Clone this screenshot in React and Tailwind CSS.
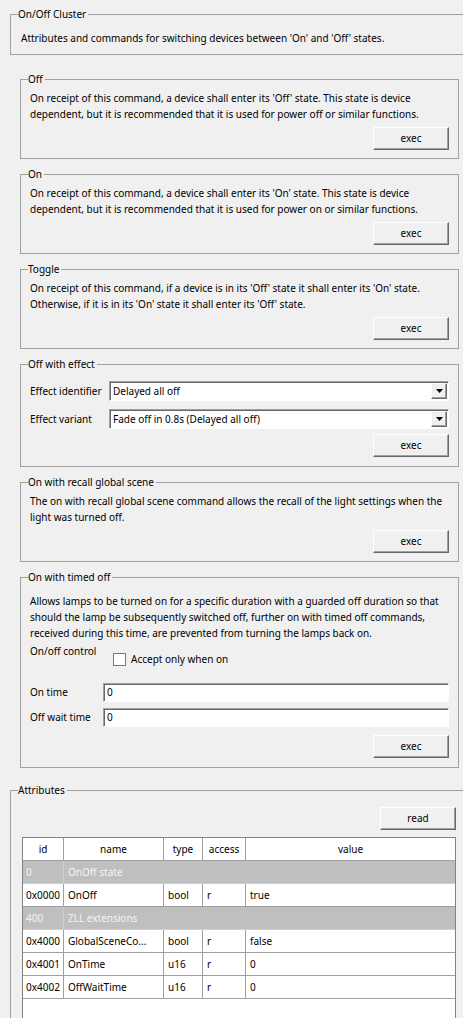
import React from "react";

const GroupBox = ({ title, className = "", children }) => (
  <fieldset className={`m-0 min-w-0 border border-[#a0a0a0] p-0 ${className}`}>
    <legend className="ml-[7px] pr-[2px] leading-[14px]">{title}</legend>
    {children}
  </fieldset>
);

const Button = ({ label = "exec", className = "" }) => (
  <div className={`flex justify-end ${className}`}>
    <button className="h-[23px] w-[76px] border border-b-[#696969] border-l-white border-r-[#696969] border-t-white bg-[#f0f0f0] text-black shadow-[inset_-1px_-1px_0_#a0a0a0]">
      {label}
    </button>
  </div>
);

const Combo = ({ value }) => (
  <div className="flex h-[20px] flex-1 items-center border border-b-white border-l-[#a0a0a0] border-r-white border-t-[#a0a0a0] bg-white shadow-[inset_1px_1px_0_#696969]">
    <span className="flex-1 pl-[3px]">{value}</span>
    <div className="mr-[1px] flex h-[16px] w-[16px] items-center justify-center border border-b-[#696969] border-l-white border-r-[#696969] border-t-white bg-[#f0f0f0] shadow-[inset_-1px_-1px_0_#a0a0a0]">
      <svg width="7" height="4" viewBox="0 0 7 4">
        <path d="M0 0h7L3.5 4z" fill="#000" />
      </svg>
    </div>
  </div>
);

const LineEdit = ({ value }) => (
  <div className="flex h-[19px] flex-1 items-center border border-b-white border-l-[#a0a0a0] border-r-white border-t-[#a0a0a0] bg-white pl-[3px] shadow-[inset_1px_1px_0_#696969]">
    {value}
  </div>
);

const CommandBox = ({ title, text }) => (
  <GroupBox title={title}>
    <div className="px-[9px] pb-[8px] pt-[4px]">
      <p className="leading-[16px]">{text}</p>
      <Button className="mt-[5px]" />
    </div>
  </GroupBox>
);

const rows = [
  { group: true, id: "0", name: "OnOff state" },
  { id: "0x0000", name: "OnOff", type: "bool", access: "r", value: "true" },
  { group: true, id: "400", name: "ZLL extensions" },
  { id: "0x4000", name: "GlobalSceneCo...", type: "bool", access: "r", value: "false" },
  { id: "0x4001", name: "OnTime", type: "u16", access: "r", value: "0" },
  { id: "0x4002", name: "OffWaitTime", type: "u16", access: "r", value: "0" },
];

const headers = ["id", "name", "type", "access", "value"];

export default function App() {
  return (
    <div className="h-[1018px] w-[463px] overflow-hidden bg-[#f0f0f0] font-['Noto_Sans',sans-serif] text-[10px] leading-[13px] text-black">
      <div className="ml-[10px] w-[456px] pt-[7px]">
        {/* CLUSTER INFO */}
        <GroupBox title="On/Off Cluster">
          <p className="pb-[9px] pl-[10px] pt-[11px]">
            Attributes and commands for switching devices between 'On' and 'Off' states.
          </p>
        </GroupBox>

        {/* COMMANDS */}
        <div className="ml-[10px] mr-[7px] mt-[17px] flex flex-col gap-[8px]">
          <CommandBox
            title="Off"
            text="On receipt of this command, a device shall enter its 'Off' state. This state is device dependent, but it is recommended that it is used for power off or similar functions."
          />
          <CommandBox
            title="On"
            text="On receipt of this command, a device shall enter its 'On' state. This state is device dependent, but it is recommended that it is used for power on or similar functions."
          />
          <CommandBox
            title="Toggle"
            text="On receipt of this command, if a device is in its 'Off' state it shall enter its 'On' state. Otherwise, if it is in its 'On' state it shall enter its 'Off' state."
          />

          <GroupBox title="Off with effect">
            <div className="px-[9px] pb-[9px] pt-[10px]">
              <div className="flex items-center">
                <span className="w-[79px]">Effect identifier</span>
                <Combo value="Delayed all off" />
              </div>
              <div className="mt-[8px] flex items-center">
                <span className="w-[79px]">Effect variant</span>
                <Combo value="Fade off in 0.8s (Delayed all off)" />
              </div>
              <Button className="mt-[5px]" />
            </div>
          </GroupBox>

          <CommandBox
            title="On with recall global scene"
            text="The on with recall global scene command allows the recall of the light settings when the light was turned off."
          />

          <GroupBox title="On with timed off">
            <div className="px-[9px] pb-[9px] pt-[9px]">
              <p className="leading-[16px]">
                Allows lamps to be turned on for a specific duration with a guarded off duration so that should the lamp be subsequently switched off, further on with timed off commands, received during this time, are prevented from turning the lamps back on.
              </p>
              <div className="mt-[4px] flex items-start">
                <span className="w-[73px]">On/off control</span>
                <label className="ml-[10px] mt-[8px] flex items-center gap-[5px]">
                  <span className="h-[13px] w-[13px] border border-[#7a7a7a] bg-white" />
                  <span>Accept only when on</span>
                </label>
              </div>
              <div className="mt-[17px] flex items-center">
                <span className="w-[73px]">On time</span>
                <LineEdit value="0" />
              </div>
              <div className="mt-[6px] flex items-center">
                <span className="w-[73px]">Off wait time</span>
                <LineEdit value="0" />
              </div>
              <Button className="mt-[8px]" />
            </div>
          </GroupBox>
        </div>

        {/* ATTRIBUTES */}
        <GroupBox title="Attributes" className="mt-[15px]">
          <div className="pl-[11px] pr-[9px] pt-[10px]">
            <Button label="read" />
            <div className="mt-[7px] h-[200px] border border-[#828282] bg-white">
              <div className="grid grid-cols-[41px_100px_39px_43px_1fr]">
                {headers.map((h, i) => (
                  <div
                    key={h}
                    className={`flex h-[23px] items-center justify-center border-b border-[#a0a0a0] bg-white ${i < 4 ? "border-r" : ""}`}
                  >
                    {h}
                  </div>
                ))}
                {rows.map((r) =>
                  r.group ? (
                    <React.Fragment key={r.id}>
                      <div className="flex h-[23px] items-center border-b border-r border-[#d0d0d0] bg-[#bfbfbf] pl-[3px] text-[#f4f4f4]">
                        {r.id}
                      </div>
                      <div className="col-span-4 flex h-[23px] items-center border-b border-[#d0d0d0] bg-[#bfbfbf] pl-[4px] text-[#f4f4f4]">
                        {r.name}
                      </div>
                    </React.Fragment>
                  ) : (
                    <React.Fragment key={r.id}>
                      <div className="flex h-[23px] items-center border-b border-r border-[#a0a0a0] pl-[3px]">{r.id}</div>
                      <div className="flex h-[23px] items-center border-b border-r border-[#a0a0a0] pl-[4px]">{r.name}</div>
                      <div className="flex h-[23px] items-center border-b border-r border-[#a0a0a0] pl-[4px]">{r.type}</div>
                      <div className="flex h-[23px] items-center border-b border-r border-[#a0a0a0] pl-[4px]">{r.access}</div>
                      <div className="flex h-[23px] items-center border-b border-[#a0a0a0] pl-[4px]">{r.value}</div>
                    </React.Fragment>
                  )
                )}
              </div>
            </div>
          </div>
        </GroupBox>
      </div>
    </div>
  );
}
